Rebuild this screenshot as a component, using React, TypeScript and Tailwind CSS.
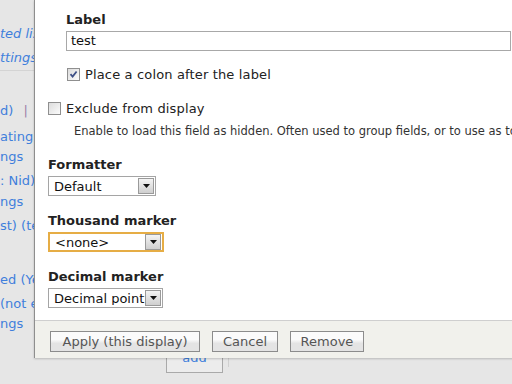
import React from 'react'

const font = "font-['DejaVu_Sans',Verdana,sans-serif]"

function Checkbox({ checked }: { checked?: boolean }) {
  return (
    <span className="relative inline-block w-[13px] h-[13px] shrink-0 border border-[#8f8f8f] bg-gradient-to-br from-[#dcdcdc] to-[#fbfbfb]">
      {checked && (
        <svg className="absolute left-[1px] top-[1px]" width="9" height="9" viewBox="0 0 9 9">
          <path d="M1.5 4.2 L3.6 6.5 L7.6 1.5" fill="none" stroke="#3d4f86" strokeWidth="1.8" />
        </svg>
      )}
    </span>
  )
}

function Select({ value, width, focused }: { value: string; width: string; focused?: boolean }) {
  return (
    <div
      className={`${width} h-[20px] flex items-center bg-white ${
        focused ? 'border-2 border-[#e6ad45]' : 'border border-[#a5a5a5]'
      }`}
    >
      <span className="flex-1 pl-[5px] text-[13px] text-[#111] leading-none whitespace-nowrap overflow-hidden">{value}</span>
      <span className="w-[16px] h-[16px] mr-[1px] flex items-center justify-center border border-[#9a9a9a] bg-gradient-to-b from-[#f4f4f4] to-[#cfcfcf]">
        <svg width="7" height="4" viewBox="0 0 7 4">
          <path d="M0 0 H7 L3.5 4 Z" fill="#111" />
        </svg>
      </span>
    </div>
  )
}

function Button({ children, width }: { children: React.ReactNode; width: string }) {
  return (
    <button className={`${width} h-[21px] border border-[#8c8c8c] bg-gradient-to-b from-[#fbfbfb] from-40% to-[#e4e4e4] to-60% text-[13px] text-[#555] leading-none`}>
      {children}
    </button>
  )
}

const bgRows: { mt: number; text: React.ReactNode; italic?: boolean; sep?: boolean }[] = [
  { mt: 26, text: 'ted list settings', italic: true },
  { mt: 8, text: 'ttings', italic: true, sep: true },
  { mt: 32, text: <>d) <span className="text-[#9b7fa8] ml-[6px]">|</span> <span className="ml-[6px]">add</span></> },
  { mt: 10, text: 'ating)' },
  { mt: 4, text: 'ngs' },
  { mt: 8, text: ': Nid)' },
  { mt: 5, text: 'ngs' },
  { mt: 8, text: 'st) (teaser)' },
  { mt: 38, text: 'ed (Yes)' },
  { mt: 8, text: ' (not empty)' },
  { mt: 4, text: 'ngs' },
]

export default function App() {
  return (
    <div className={`relative w-[512px] h-[384px] overflow-hidden bg-[#e6e6e6] ${font}`}>
      {/* page behind the dialog */}
      <div className="flex flex-col w-[120px] text-[13px] text-[#3f7fdc]">
        {bgRows.map((r, i) => (
          <div
            key={i}
            style={{ marginTop: r.mt }}
            className={`leading-[16px] whitespace-nowrap ${r.italic ? 'italic' : ''} ${
              r.sep ? 'h-[21px] border-b border-[#d4d4d4]' : 'h-[16px]'
            }`}
          >
            {r.text}
          </div>
        ))}
      </div>
      <div className="absolute left-[166px] top-[340px] w-[57px] h-[33px] border border-[#a9a9a9] bg-[#ececec] flex justify-center pt-[10px] text-[13px] text-[#3f7fdc] leading-none">
        add
      </div>
      <div className="absolute left-[228px] top-[357px] w-px h-[10px] bg-[#d0d0d0]" />

      {/* dialog */}
      <div className="absolute left-[34px] top-0 w-[500px] h-[358px] flex flex-col border-l border-[#8e8e8e] shadow-[0_1px_2px_rgba(0,0,0,0.2)]">
        <div className="h-[320px] bg-white pl-[13px] text-[13px] text-[#222]">
          <div className="pl-[18px] pt-[12px]">
            <div className="h-[16px] leading-[16px] font-bold">Label</div>
            <div className="mt-[3px] w-[445px] h-[20px] border border-[#a8a8a8] flex items-center pl-[4px] text-[#111]">test</div>
            <label className="mt-[17px] flex items-center gap-[5px] pl-[1px] h-[13px]">
              <Checkbox checked />
              <span className="leading-none tracking-[0.15px]">Place a colon after the label</span>
            </label>
          </div>
          <label className="mt-[21px] flex items-center gap-[5px] h-[13px]">
            <Checkbox />
            <span className="leading-none tracking-[0.15px]">Exclude from display</span>
          </label>
          <div className="mt-[9px] pl-[26px] h-[14px] leading-[14px] text-[11.5px] text-[#333] whitespace-nowrap">
            Enable to load this field as hidden. Often used to group fields, or to use as tokens.
          </div>

          <div className="mt-[19px] h-[16px] leading-[16px] font-bold">Formatter</div>
          <div className="mt-[3px]">
            <Select value="Default" width="w-[108px]" />
          </div>

          <div className="mt-[17px] h-[16px] leading-[16px] font-bold">Thousand marker</div>
          <div className="mt-[3px]">
            <Select value="<none>" width="w-[116px]" focused />
          </div>

          <div className="mt-[17px] h-[16px] leading-[16px] font-bold">Decimal marker</div>
          <div className="mt-[3px]">
            <Select value="Decimal point" width="w-[115px]" />
          </div>
        </div>
        <div className="flex-1 bg-[#f1f1ec] border-t border-[#cfcfcf] flex items-start pt-[10px] pl-[15px] gap-[12px]">
          <Button width="w-[150px]">Apply (this display)</Button>
          <Button width="w-[66px]">Cancel</Button>
          <Button width="w-[74px]">Remove</Button>
        </div>
      </div>
    </div>
  )
}
